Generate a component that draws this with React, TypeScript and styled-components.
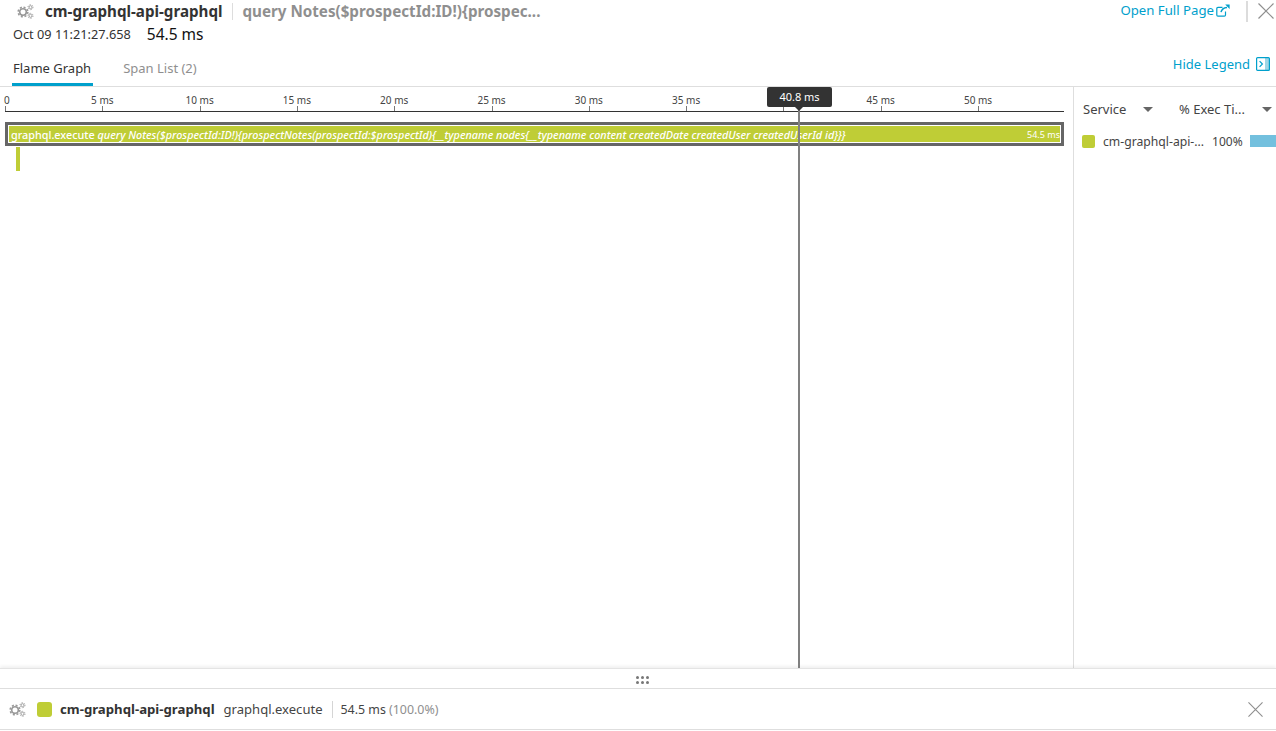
import React from 'react';
import styled, { createGlobalStyle } from 'styled-components';

const GlobalStyle = createGlobalStyle`
  html, body {
    margin: 0;
    padding: 0;
    background: #fff;
    overflow: hidden;
  }
  body {
    font-family: 'Noto Sans', 'Open Sans', sans-serif;
    color: #333;
  }
`;

const GREEN = '#bfcd36';
const TICK_STEP = 97.3;
const ticks = [0, 5, 10, 15, 20, 25, 30, 35, 40, 45, 50];

const GearsIcon: React.FC<{ color?: string }> = ({ color = '#999' }) => (
  <svg width="17" height="15" viewBox="0 0 17 15" fill="none" stroke={color}>
    <circle cx="6" cy="8" r="3.3" strokeWidth="1.6" />
    <circle cx="6" cy="8" r="4.8" strokeWidth="1.6" strokeDasharray="2 1.77" />
    <circle cx="13.5" cy="3.2" r="1.5" strokeWidth="0.9" />
    <circle cx="13.5" cy="3.2" r="2.5" strokeWidth="1" strokeDasharray="1.2 1.42" />
    <circle cx="13.5" cy="11.8" r="1.5" strokeWidth="0.9" />
    <circle cx="13.5" cy="11.8" r="2.5" strokeWidth="1" strokeDasharray="1.2 1.42" />
  </svg>
);

const ExternalIcon = () => (
  <svg width="14" height="13" viewBox="0 0 14 13" fill="none" stroke="#00a0cc" strokeWidth="1.2">
    <path d="M9.5 7.5V11a1.2 1.2 0 0 1-1.2 1.2H2A1.2 1.2 0 0 1 .8 11V4.6A1.2 1.2 0 0 1 2 3.4h4.5" />
    <path d="M5 8.2C5.6 5.4 7.6 3.6 11 3.4" strokeWidth="1.5" />
    <path d="M9.2 .4h4.4v4.6z" fill="#00a0cc" stroke="none" />
  </svg>
);

const CloseIcon: React.FC<{ size: number }> = ({ size }) => (
  <svg width={size} height={size} viewBox="0 0 16 16" stroke="#8f8f8f" strokeWidth="1.2" fill="none">
    <path d="M.5.5l15 15M15.5.5l-15 15" />
  </svg>
);

const LegendToggleIcon = () => (
  <svg width="14" height="14" viewBox="0 0 14 14" fill="none">
    <rect x="9" y="1" width="4" height="12" fill="#9fd6e6" />
    <rect x=".6" y=".6" width="12.8" height="12.8" rx="1" stroke="#00a0cc" strokeWidth="1.2" />
    <path d="M3.6 4.2L6.4 7l-2.8 2.8" stroke="#00a0cc" strokeWidth="1.2" />
  </svg>
);

const App: React.FC = () => {
  return (
    <Page>
      <GlobalStyle />
      <Header>
        <TitleRow>
          <TitleIcon>
            <GearsIcon />
          </TitleIcon>
          <ServiceName>cm-graphql-api-graphql</ServiceName>
          <TitleDivider />
          <Resource>query Notes($prospectId:ID!){'{'}prospec...</Resource>
          <OpenLink>
            Open Full Page
            <ExternalIcon />
          </OpenLink>
          <HeaderDivider />
          <HeaderClose>
            <CloseIcon size={16} />
          </HeaderClose>
        </TitleRow>
        <MetaRow>
          <Timestamp>Oct 09 11:21:27.658</Timestamp>
          <Duration>54.5 ms</Duration>
        </MetaRow>
        <TabRow>
          <Tab $active>Flame Graph</Tab>
          <Tab>Span List (2)</Tab>
          <LegendToggle>
            Hide Legend
            <LegendToggleIcon />
          </LegendToggle>
        </TabRow>
      </Header>

      <Main>
        <Graph>
          <Ruler>
            {ticks.map((t) => (
              <Tick key={t} $left={(t / 5) * TICK_STEP}>
                <TickLabel $first={t === 0}>{t === 0 ? '0' : `${t} ms`}</TickLabel>
              </Tick>
            ))}
          </Ruler>
          <RootSpan>
            <SpanFill>
              <SpanName>
                graphql.execute{' '}
                <em>
                  query Notes($prospectId:ID!){'{'}prospectNotes(prospectId:$prospectId){'{'}__typename nodes{'{'}__typename
                  content createdDate createdUser createdUserId id{'}}}'}
                </em>
              </SpanName>
              <SpanTime>54.5 ms</SpanTime>
            </SpanFill>
          </RootSpan>
          <ChildSpan />
          <Cursor />
          <CursorTip>40.8 ms</CursorTip>
        </Graph>
        <Legend>
          <LegendHead>
            <ServiceHead>
              Service
              <Caret />
            </ServiceHead>
            <ExecHead>
              % Exec Ti...
              <Caret />
            </ExecHead>
          </LegendHead>
          <LegendRow>
            <Swatch />
            <LegendName>cm-graphql-api-...</LegendName>
            <LegendPct>100%</LegendPct>
            <LegendBar />
          </LegendRow>
        </Legend>
      </Main>

      <DragBar>
        <DragDots>
          {Array.from({ length: 6 }).map((_, i) => (
            <i key={i} />
          ))}
        </DragDots>
      </DragBar>

      <Footer>
        <GearsIcon color="#999" />
        <FooterSwatch />
        <FooterService>cm-graphql-api-graphql</FooterService>
        <FooterOperation>graphql.execute</FooterOperation>
        <FooterDivider />
        <FooterTime>
          54.5 ms <span>(100.0%)</span>
        </FooterTime>
        <FooterClose>
          <CloseIcon size={15} />
        </FooterClose>
      </Footer>
    </Page>
  );
};

export default App;

const Page = styled.div`
  display: flex;
  flex-direction: column;
  width: 1276px;
  height: 731px;
  overflow: hidden;
  background: #fff;
`;

const Header = styled.header`
  flex: none;
  height: 87px;
  box-sizing: border-box;
  border-bottom: 1px solid #dedede;
`;

const TitleRow = styled.div`
  display: flex;
  align-items: center;
  height: 22px;
  padding-left: 17px;
`;

const TitleIcon = styled.span`
  display: flex;
  width: 28px;
`;

const ServiceName = styled.span`
  font-size: 15.15px;
  font-weight: 700;
  color: #333;
  white-space: nowrap;
`;

const TitleDivider = styled.span`
  width: 1px;
  height: 17px;
  margin: 0 9px 0 10px;
  background: #ddd;
`;

const Resource = styled.span`
  flex: 1;
  font-size: 15.2px;
  font-weight: 700;
  color: #8f8f8f;
  white-space: nowrap;
`;

const OpenLink = styled.a`
  display: flex;
  align-items: center;
  gap: 2px;
  padding-bottom: 2px;
  font-size: 13.2px;
  color: #00a0cc;
`;

const HeaderDivider = styled.span`
  width: 2px;
  height: 21px;
  margin: 0 10px 0 16px;
  background: #dcdcdc;
`;

const HeaderClose = styled.span`
  display: flex;
  width: 18px;
`;

const MetaRow = styled.div`
  display: flex;
  align-items: center;
  height: 24px;
  padding-left: 13px;
`;

const Timestamp = styled.span`
  font-size: 12.75px;
  color: #333;
`;

const Duration = styled.span`
  margin-left: 16px;
  font-size: 15.5px;
  color: #111;
`;

const TabRow = styled.div`
  display: flex;
  align-items: stretch;
  height: 40px;
  padding-left: 12px;
  gap: 29px;
`;

const Tab = styled.div<{ $active?: boolean }>`
  display: flex;
  align-items: center;
  box-sizing: border-box;
  padding: 7px 2px 0 1px;
  font-size: 13px;
  color: ${(p) => (p.$active ? '#333' : '#8f8f8f')};
  border-bottom: 3px solid ${(p) => (p.$active ? '#00a0cc' : 'transparent')};
`;

const LegendToggle = styled.a`
  display: flex;
  align-items: center;
  gap: 6px;
  margin-left: auto;
  margin-right: 6px;
  margin-bottom: 4px;
  font-size: 13px;
  color: #00a0cc;
`;

const Main = styled.main`
  flex: 1;
  display: flex;
  min-height: 0;
`;

const Graph = styled.section`
  position: relative;
  flex: 1;
  padding: 0 9px 0 5px;
`;

const Ruler = styled.div`
  position: relative;
  height: 24px;
  margin-bottom: 10px;
  border-bottom: 1px solid #333;
`;

const Tick = styled.span<{ $left: number }>`
  position: absolute;
  left: ${(p) => p.$left}px;
  bottom: 0;
  width: 1px;
  height: 5px;
  background: #777;
`;

const TickLabel = styled.span<{ $first?: boolean }>`
  position: absolute;
  bottom: 4px;
  left: 0;
  transform: translateX(${(p) => (p.$first ? '-1px' : '-50%')});
  font-size: 10px;
  line-height: 14px;
  color: #444;
  white-space: nowrap;
`;

const RootSpan = styled.div`
  box-sizing: border-box;
  height: 24px;
  border: 3px solid #666;
`;

const SpanFill = styled.div`
  display: flex;
  align-items: center;
  justify-content: space-between;
  box-sizing: border-box;
  height: 100%;
  padding: 0 0 0 2px;
  background: ${GREEN};
  border: 1px solid #fff;
  color: #fff;
  white-space: nowrap;
`;

const SpanName = styled.span`
  font-size: 10.83px;
  font-weight: 500;
`;

const SpanTime = styled.span`
  font-size: 9px;
`;

const ChildSpan = styled.div`
  width: 4px;
  height: 24px;
  margin: 1px 0 0 11px;
  background: ${GREEN};
`;

const Cursor = styled.div`
  position: absolute;
  left: 798px;
  top: 23px;
  bottom: 0;
  width: 2px;
  background: #808080;
`;

const CursorTip = styled.div`
  position: absolute;
  left: 767px;
  top: 0;
  width: 65px;
  height: 20px;
  border-radius: 2px;
  background: #333;
  color: #fff;
  font-size: 11px;
  line-height: 20px;
  text-align: center;

  &::after {
    content: '';
    position: absolute;
    left: 28px;
    top: 20px;
    border: 4px solid transparent;
    border-top-color: #333;
  }
`;

const Legend = styled.aside`
  flex: none;
  box-sizing: border-box;
  width: 203px;
  padding: 12px 0 0 8px;
  border-left: 1px solid #dedede;
  overflow: hidden;
`;

const LegendHead = styled.div`
  display: flex;
  align-items: center;
  height: 20px;
  margin-left: 1px;
  font-size: 13px;
  color: #444;
`;

const ServiceHead = styled.span`
  display: flex;
  align-items: center;
  width: 96px;
  white-space: nowrap;
`;

const ExecHead = styled.span`
  display: flex;
  align-items: center;
  white-space: nowrap;
`;

const Caret = styled.i`
  width: 0;
  height: 0;
  margin-left: 17px;
  border: 5px solid transparent;
  border-bottom: 0;
  border-top: 5px solid #666;
`;

const LegendRow = styled.div`
  display: flex;
  align-items: center;
  height: 20px;
  margin-top: 12px;
`;

const Swatch = styled.span`
  flex: none;
  width: 13px;
  height: 13px;
  border-radius: 2px;
  background: ${GREEN};
`;

const LegendName = styled.span`
  margin-left: 8px;
  font-size: 12.2px;
  color: #444;
  white-space: nowrap;
`;

const LegendPct = styled.span`
  margin-left: 8px;
  font-size: 12px;
  color: #444;
`;

const LegendBar = styled.span`
  flex: none;
  width: 26px;
  height: 12px;
  margin-left: 7px;
  background: #73c0de;
`;

const DragBar = styled.div`
  flex: none;
  display: flex;
  align-items: center;
  justify-content: center;
  height: 21px;
  box-sizing: border-box;
  padding: 2px 0 0 8px;
  border-top: 1px solid #e4e4e4;
  border-bottom: 1px solid #dedede;
  box-shadow: 0 -2px 3px rgba(0, 0, 0, 0.06);
`;

const DragDots = styled.div`
  display: grid;
  grid-template-columns: repeat(3, 3px);
  gap: 2px;

  i {
    width: 3px;
    height: 3px;
    border-radius: 50%;
    background: #777;
  }
`;

const Footer = styled.footer`
  flex: none;
  display: flex;
  align-items: center;
  box-sizing: border-box;
  height: 41px;
  margin-bottom: 1px;
  padding: 0 13px 0 9px;
  border-bottom: 1px solid #dedede;
`;

const FooterSwatch = styled.span`
  width: 15px;
  height: 15px;
  margin-left: 11px;
  border-radius: 3px;
  background: ${GREEN};
`;

const FooterService = styled.span`
  margin-left: 8px;
  font-size: 13.2px;
  font-weight: 700;
  color: #333;
`;

const FooterOperation = styled.span`
  margin-left: 9px;
  font-size: 13.05px;
  color: #444;
`;

const FooterDivider = styled.span`
  width: 1px;
  height: 17px;
  margin: 0 8px 0 9px;
  background: #d5d5d5;
`;

const FooterTime = styled.span`
  font-size: 12.4px;
  color: #444;

  span {
    color: #8f8f8f;
  }
`;

const FooterClose = styled.span`
  display: flex;
  margin-left: auto;
`;
